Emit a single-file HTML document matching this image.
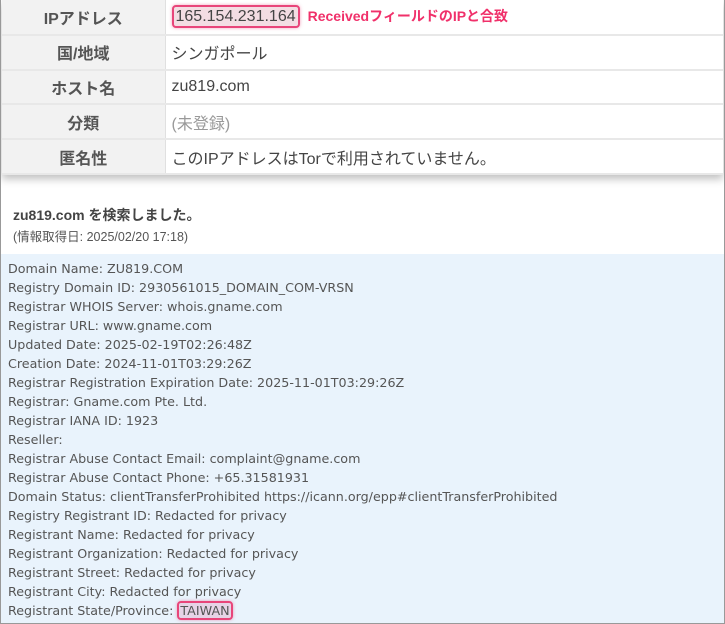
<!DOCTYPE html>
<html><head><meta charset="utf-8"><style>
*{margin:0;padding:0;box-sizing:border-box}
body{width:725px;height:624px;overflow:hidden;background:#fff;font-family:"DejaVu Sans","Noto Sans CJK JP",sans-serif;color:#555;position:relative}
.frame{position:absolute;left:0;top:0;width:725px;height:624px;border:1px solid #999;border-top:none;pointer-events:none;z-index:5}
table{position:absolute;left:2px;top:0;width:721px;border-collapse:collapse;box-shadow:0 4px 8px rgba(0,0,0,.25);font-family:"Liberation Sans","Noto Sans CJK JP",sans-serif}
td{height:34.8px;border-bottom:2px solid #e8e8e8;font-size:16px;color:#444}
td.h{width:163px;background:#f2f2f2;text-align:center;font-weight:bold;color:#555;border-right:1px solid #e0e0e0}
td.v{padding-left:6px;background:#fff}
.ip{display:inline-block;border:2px solid #e8457a;border-radius:4px;background:#f3dde3;padding:0 2px;line-height:19px;box-shadow:0 0 3px rgba(232,69,122,.5)}
.note{color:#f0306a;font-weight:bold;font-size:14px;margin-left:8px}
.t1{position:absolute;left:13px;top:205px;font-size:14px;font-weight:bold;color:#444;font-family:"Liberation Sans","Noto Sans CJK JP",sans-serif}
.t2{position:absolute;left:13px;top:226px;font-size:12.5px;color:#555;font-family:"Liberation Sans","Noto Sans CJK JP",sans-serif}
.box{position:absolute;left:1px;top:254px;width:723px;height:370px;background:#e9f3fc;padding:5px 7px;font-size:12.7px;line-height:19px;color:#555}
.tw{border:2px solid #e8457a;border-radius:4px;background:#e6d3e6;padding:0 1px;box-shadow:0 0 3px rgba(232,69,122,.5)}
</style></head><body>
<table>
<tr><td class="h">IPアドレス</td><td class="v"><span class="ip">165.154.231.164</span><span class="note">ReceivedフィールドのIPと合致</span></td></tr>
<tr><td class="h">国/地域</td><td class="v">シンガポール</td></tr>
<tr><td class="h">ホスト名</td><td class="v">zu819.com</td></tr>
<tr><td class="h">分類</td><td class="v" style="color:#999">(未登録)</td></tr>
<tr><td class="h">匿名性</td><td class="v">このIPアドレスはTorで利用されていません。</td></tr>
</table>
<div class="t1">zu819.com を検索しました。</div>
<div class="t2">(情報取得日: 2025/02/20 17:18)</div>
<div class="box">
Domain Name: ZU819.COM<br>
Registry Domain ID: 2930561015_DOMAIN_COM-VRSN<br>
Registrar WHOIS Server: whois.gname.com<br>
Registrar URL: www.gname.com<br>
Updated Date: 2025-02-19T02:26:48Z<br>
Creation Date: 2024-11-01T03:29:26Z<br>
Registrar Registration Expiration Date: 2025-11-01T03:29:26Z<br>
Registrar: Gname.com Pte. Ltd.<br>
Registrar IANA ID: 1923<br>
Reseller:<br>
Registrar Abuse Contact Email: complaint@gname.com<br>
Registrar Abuse Contact Phone: +65.31581931<br>
Domain Status: clientTransferProhibited https://icann.org/epp#clientTransferProhibited<br>
Registry Registrant ID: Redacted for privacy<br>
Registrant Name: Redacted for privacy<br>
Registrant Organization: Redacted for privacy<br>
Registrant Street: Redacted for privacy<br>
Registrant City: Redacted for privacy<br>
Registrant State/Province: <span class="tw">TAIWAN</span>
</div>
<div class="frame"></div>
</body></html>
